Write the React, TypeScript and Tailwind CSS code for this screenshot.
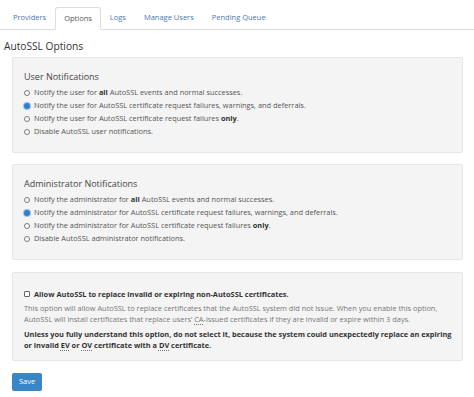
import React from 'react';

const tabs = ['Providers', 'Options', 'Logs', 'Manage Users', 'Pending Queue'];

function Radio({ checked }: { checked?: boolean }) {
  return checked ? (
    <span className="mr-[4px] inline-block h-[6px] w-[6px] shrink-0 rounded-full bg-[#2f7fd1] shadow-[0_0_0_1px_#9cc3ec]" />
  ) : (
    <span className="mr-[4px] inline-block h-[6px] w-[6px] shrink-0 rounded-full border border-[#777] bg-white" />
  );
}

function Abbr({ children }: { children: React.ReactNode }) {
  return <span className="underline decoration-dotted decoration-[#777] underline-offset-2">{children}</span>;
}

function NotifyPanel({ title, who, noun }: { title: string; who: string; noun: string }) {
  return (
    <div className="mx-[12px] mr-[11px] rounded-[2px] border border-[#e6e6e6] bg-[#f4f4f4] pl-[11px] pt-[13px] pb-[14px]">
      <div className="mb-[3px] text-[9px] leading-[12px] text-[#444]">{title}</div>
      <div className="text-[7.4px] leading-[13px] text-[#555]">
        <div className="flex items-center">
          <Radio />
          <span>
            Notify the {who} for <b className="text-[#333]">all</b> AutoSSL events and normal successes.
          </span>
        </div>
        <div className="flex items-center">
          <Radio checked />
          <span>Notify the {who} for AutoSSL certificate request failures, warnings, and deferrals.</span>
        </div>
        <div className="flex items-center">
          <Radio />
          <span>
            Notify the {who} for AutoSSL certificate request failures <b className="text-[#333]">only</b>.
          </span>
        </div>
        <div className="flex items-center">
          <Radio />
          <span>Disable AutoSSL {noun} notifications.</span>
        </div>
      </div>
    </div>
  );
}

export default function App() {
  return (
    <div className="min-h-[397px] w-[474px] bg-white font-['Open_Sans',sans-serif]">
      {/* Tabs */}
      <div className="flex h-[30px] items-end border-b border-[#dddddd] pl-[4px]">
        {tabs.map((t) => (
          <div
            key={t}
            className={
              t === 'Options'
                ? '-mb-px flex h-[23px] items-center rounded-t-[3px] border border-b-white border-[#dddddd] bg-white px-[8px] text-[7.5px] text-[#555]'
                : 'flex h-[22px] items-center px-[9px] text-[7.5px] text-[#4a79ad]'
            }
          >
            {t}
          </div>
        ))}
      </div>

      <h1 className="pl-[4px] pt-[8px] pb-[3px] text-[10.2px] leading-[16px] text-[#333]">AutoSSL Options</h1>

      <NotifyPanel title="User Notifications" who="user" noun="user" />
      <div className="h-[11px]" />
      <NotifyPanel title="Administrator Notifications" who="administrator" noun="administrator" />
      <div className="h-[12px]" />

      <div className="mx-[12px] mr-[11px] rounded-[2px] border border-[#e6e6e6] bg-[#f4f4f4] pl-[11px] pr-[2px] pt-[15px] pb-[9px]">
        <div className="flex items-center text-[7.4px] font-bold leading-[12px] text-[#333]">
          <span className="mr-[4px] inline-block h-[6px] w-[6px] shrink-0 rounded-[1px] border border-[#666] bg-white" />
          Allow AutoSSL to replace invalid or expiring non-AutoSSL certificates.
        </div>
        <p className="mt-[3px] text-[7.4px] leading-[11px] text-[#777]">
          This option will allow AutoSSL to replace certificates that the AutoSSL system did not issue. When you enable this option,
          AutoSSL will install certificates that replace users’ <Abbr>CA</Abbr>-issued certificates if they are invalid or expire within 3 days.
        </p>
        <p className="mt-[4px] text-[7.4px] font-bold leading-[11px] text-[#333]">
          Unless you fully understand this option, do not select it, because the system could unexpectedly replace an expiring
          or invalid <Abbr>EV</Abbr> or <Abbr>OV</Abbr> certificate with a <Abbr>DV</Abbr> certificate.
        </p>
      </div>

      <div className="pl-[12px] pt-[12px]">
        <button className="flex h-[18px] w-[30px] items-center justify-center rounded-[2px] bg-[#3a85c6] text-[7.5px] text-white">
          Save
        </button>
      </div>
    </div>
  );
}
